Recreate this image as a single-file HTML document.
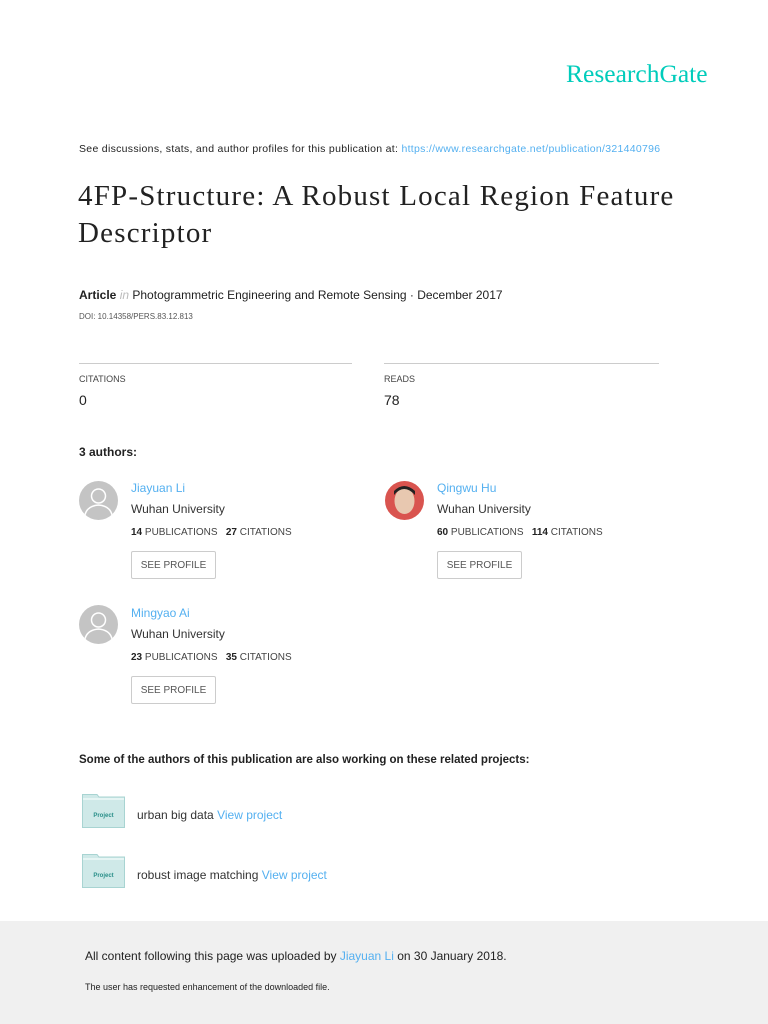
<!DOCTYPE html>
<html><head><meta charset="utf-8"><style>
*{margin:0;padding:0;box-sizing:border-box}
body{width:768px;height:1024px;background:#fff;font-family:"Liberation Sans",sans-serif;color:#222;position:relative;overflow:hidden}
.a{position:absolute;white-space:nowrap}
.blue{color:#54b0f0}
.av{position:absolute;width:39px;height:39px;border-radius:50%;background:#c4c4c4;overflow:hidden}
.btn{position:absolute;width:85px;height:28px;border:1px solid #ccc;border-radius:2px;font-size:10px;color:#555;text-align:center;line-height:28px}
.small{font-size:10px;color:#444}
.small b{color:#222}
.folder{position:absolute;width:43px;height:34px}
</style></head><body>
<div class="a" style="left:566px;top:59px;font-size:25.5px;color:#00ccbb;font-family:'Liberation Serif',serif">ResearchGate</div>
<div class="a" style="left:79px;top:143px;font-size:10.5px;color:#222;letter-spacing:0.3px">See discussions, stats, and author profiles for this publication at: <span class="blue">https://www.researchgate.net/publication/321440796</span></div>
<div class="a" style="left:78px;top:178px;font-size:29px;line-height:37px;font-family:'Liberation Serif',serif;color:#222;letter-spacing:1.2px">4FP-Structure: A Robust Local Region Feature<br>Descriptor</div>
<div class="a" style="left:79px;top:288px;font-size:12px"><b>Article</b> <i style="color:#bbb">in</i> Photogrammetric Engineering and Remote Sensing · December 2017</div>
<div class="a" style="left:79px;top:312px;font-size:8px;color:#555">DOI: 10.14358/PERS.83.12.813</div>
<div class="a" style="left:79px;top:363px;width:273px;border-top:1px solid #ccc"></div>
<div class="a" style="left:384px;top:363px;width:275px;border-top:1px solid #ccc"></div>
<div class="a" style="left:79px;top:374px;font-size:9px;color:#444">CITATIONS</div>
<div class="a" style="left:384px;top:374px;font-size:9px;color:#444">READS</div>
<div class="a" style="left:79px;top:392px;font-size:14px">0</div>
<div class="a" style="left:384px;top:392px;font-size:14px">78</div>
<div class="a" style="left:79px;top:445px;font-size:12px;font-weight:bold">3 authors:</div>

<div class="av" style="left:79px;top:481px"><svg width="39" height="39"><circle cx="19.5" cy="15" r="7" fill="none" stroke="#fff" stroke-width="1.5"/><path d="M6 34 Q8 25 19.5 24 Q31 25 33 34" fill="none" stroke="#fff" stroke-width="1.5"/></svg></div>
<div class="a blue" style="left:131px;top:481px;font-size:12px">Jiayuan Li</div>
<div class="a" style="left:131px;top:502px;font-size:12px;color:#333">Wuhan University</div>
<div class="a small" style="left:131px;top:527px"><b>14</b> PUBLICATIONS &nbsp; <b>27</b> CITATIONS</div>
<div class="btn" style="left:131px;top:551px">SEE PROFILE</div>

<div class="av" style="left:385px;top:481px;background:#d9544f"><svg width="39" height="39"><ellipse cx="19.5" cy="20" rx="10" ry="13" fill="#e8c8b0"/><path d="M9 14 Q19 2 30 14 L30 10 Q19 0 9 10Z" fill="#222"/></svg></div>
<div class="a blue" style="left:437px;top:481px;font-size:12px">Qingwu Hu</div>
<div class="a" style="left:437px;top:502px;font-size:12px;color:#333">Wuhan University</div>
<div class="a small" style="left:437px;top:527px"><b>60</b> PUBLICATIONS &nbsp; <b>114</b> CITATIONS</div>
<div class="btn" style="left:437px;top:551px">SEE PROFILE</div>

<div class="av" style="left:79px;top:605px"><svg width="39" height="39"><circle cx="19.5" cy="15" r="7" fill="none" stroke="#fff" stroke-width="1.5"/><path d="M6 34 Q8 25 19.5 24 Q31 25 33 34" fill="none" stroke="#fff" stroke-width="1.5"/></svg></div>
<div class="a blue" style="left:131px;top:606px;font-size:12px">Mingyao Ai</div>
<div class="a" style="left:131px;top:627px;font-size:12px;color:#333">Wuhan University</div>
<div class="a small" style="left:131px;top:652px"><b>23</b> PUBLICATIONS &nbsp; <b>35</b> CITATIONS</div>
<div class="btn" style="left:131px;top:676px">SEE PROFILE</div>

<div class="a" style="left:79px;top:754px;font-size:11.5px;font-weight:bold">Some of the authors of this publication are also working on these related projects:</div>

<svg class="folder" style="left:82px;top:794px" viewBox="0 0 43 34"><path d="M0.5 0.5H15L17 3H42.5V33.5H0.5Z" fill="#cfe9e8" stroke="#a8d4d2"/><rect x="1" y="4" width="41" height="2" fill="#e6f5f4"/><text x="21.5" y="23" font-size="6" font-family="Liberation Sans" font-weight="bold" fill="#2a8f89" text-anchor="middle">Project</text></svg>
<div class="a" style="left:137px;top:808px;font-size:12px;color:#333">urban big data <span class="blue">View project</span></div>
<svg class="folder" style="left:82px;top:854px" viewBox="0 0 43 34"><path d="M0.5 0.5H15L17 3H42.5V33.5H0.5Z" fill="#cfe9e8" stroke="#a8d4d2"/><rect x="1" y="4" width="41" height="2" fill="#e6f5f4"/><text x="21.5" y="23" font-size="6" font-family="Liberation Sans" font-weight="bold" fill="#2a8f89" text-anchor="middle">Project</text></svg>
<div class="a" style="left:137px;top:868px;font-size:12px;color:#333">robust image matching <span class="blue">View project</span></div>

<div class="a" style="left:0;top:921px;width:768px;height:103px;background:#f0f0f0"></div>
<div class="a" style="left:85px;top:949px;font-size:12px;color:#222">All content following this page was uploaded by <span class="blue">Jiayuan Li</span> on 30 January 2018.</div>
<div class="a" style="left:85px;top:982px;font-size:9px;color:#222">The user has requested enhancement of the downloaded file.</div>
</body></html>
